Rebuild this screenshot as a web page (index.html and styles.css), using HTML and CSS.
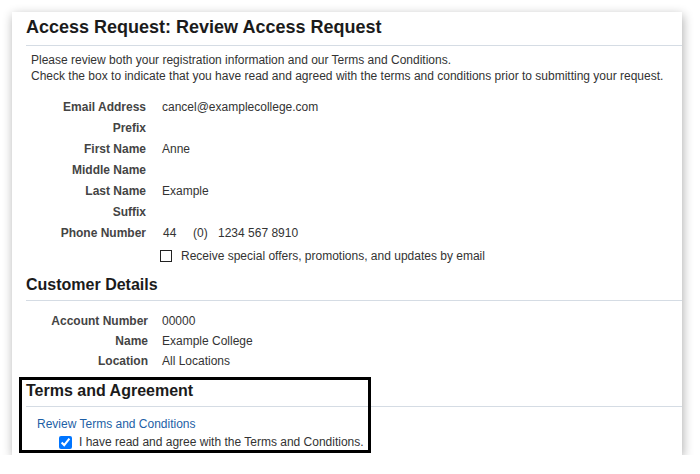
FILE: index.html
```html
<!DOCTYPE html>
<html>
<head>
<meta charset="utf-8">
<link rel="stylesheet" href="styles.css">
</head>
<body>
<div class="card">
  <h1 class="title">Access Request: Review Access Request</h1>
  <div class="intro">
    <p>Please review both your registration information and our Terms and Conditions.</p>
    <p>Check the box to indicate that you have read and agreed with the terms and conditions prior to submitting your request.</p>
  </div>
  <div class="fields">
    <div class="label">Email Address</div><div class="value">cancel@examplecollege.com</div>
    <div class="label">Prefix</div><div class="value"></div>
    <div class="label">First Name</div><div class="value">Anne</div>
    <div class="label">Middle Name</div><div class="value"></div>
    <div class="label">Last Name</div><div class="value">Example</div>
    <div class="label">Suffix</div><div class="value"></div>
    <div class="label">Phone Number</div><div class="value phone"><span class="cc">44</span><span class="area">(0)</span><span>1234 567 8910</span></div>
  </div>
  <div class="optin"><span class="box"></span><span>Receive special offers, promotions, and updates by email</span></div>

  <h2 class="section">Customer Details</h2>
  <div class="fields cust">
    <div class="label">Account Number</div><div class="value">00000</div>
    <div class="label">Name</div><div class="value">Example College</div>
    <div class="label">Location</div><div class="value">All Locations</div>
  </div>

  <h2 class="section terms-h">Terms and Agreement</h2>
  <a class="link" href="#">Review Terms and Conditions</a>
  <label class="agree"><input type="checkbox" checked><span>I have read and agree with the Terms and Conditions.</span></label>

  <div class="highlight"></div>
</div>
</body>
</html>
```
FILE: styles.css
```css
html, body {
  margin: 0;
  padding: 0;
  background: #ffffff;
}
body {
  font-family: "Liberation Sans", Arial, sans-serif;
  font-size: 12px;
  color: #333333;
}
.card {
  position: relative;
  margin: 12px 0 0 12px;
  width: 670px;
  height: 443px;
  background: #ffffff;
  box-shadow: 1px 3px 10px rgba(0, 0, 0, 0.32);
  display: flex;
  flex-direction: column;
}
.title {
  margin: 0 0 0 14px;
  padding: 4px 0 7px 0;
  font-size: 18px;
  line-height: 22px;
  font-weight: bold;
  color: #1b1b1b;
  border-bottom: 1px solid #d5dce4;
}
.intro {
  margin: 6px 0 0 19px;
}
.intro p {
  margin: 0;
  line-height: 16px;
}
.fields {
  display: grid;
  grid-template-columns: 134px 1fr;
  column-gap: 16px;
  grid-auto-rows: 21px;
  margin-top: 12px;
  align-items: center;
}
.label {
  text-align: right;
  font-weight: bold;
  color: #444444;
}
.value {
  color: #333333;
}
.phone {
  display: flex;
  padding-left: 1px;
}
.phone .cc {
  width: 30px;
}
.phone .area {
  width: 25px;
}
.optin {
  display: flex;
  align-items: center;
  height: 22px;
  margin: 2px 0 0 148px;
  gap: 9px;
}
.optin .box {
  width: 10px;
  height: 10px;
  border: 1px solid #222222;
}
.section {
  margin: 8px 0 0 14px;
  padding: 0 0 5px 0;
  font-size: 16px;
  line-height: 20px;
  font-weight: bold;
  color: #1b1b1b;
  border-bottom: 1px solid #d5dce4;
}
.fields.cust {
  grid-auto-rows: 20px;
  column-gap: 14px;
  grid-template-columns: 136px 1fr;
  margin-top: 10px;
}
.terms-h {
  margin-top: 10px;
}
.link {
  margin: 9px 0 0 25px;
  line-height: 16px;
  color: #1d5fa6;
  text-decoration: none;
  align-self: flex-start;
}
.agree {
  display: flex;
  align-items: center;
  margin: 2px 0 0 47px;
  height: 16px;
  gap: 7px;
}
.agree input {
  margin: 0;
  width: 13px;
  height: 13px;
}
.highlight {
  position: absolute;
  left: 7px;
  top: 365px;
  width: 346px;
  height: 70px;
  border: 3px solid #000000;
  pointer-events: none;
}
```
